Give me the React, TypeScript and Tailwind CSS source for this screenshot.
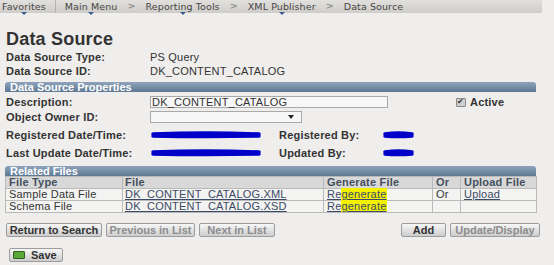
import React from "react";

const navItems = [
  { label: "Favorites", arrow: true, sep: "|" },
  { label: "Main Menu", arrow: true, sep: ">" },
  { label: "Reporting Tools", arrow: true, sep: ">" },
  { label: "XML Publisher", arrow: true, sep: ">" },
  { label: "Data Source", arrow: false, sep: "" },
];

function NavBar() {
  return (
    <div className="flex h-[13px] w-[542px] items-center bg-gradient-to-b from-[#e2e0dc] to-[#cfcdc9] pl-[2px] font-['DejaVu_Sans',sans-serif] text-[9.5px] tracking-[0.1px] text-[#454545]">
      {navItems.map((item) => (
        <div key={item.label} className="flex items-center">
          <span className="relative leading-[13px]">
            {item.label}
            {item.arrow && (
              <span className="absolute bottom-[-2px] left-1/2 h-0 w-0 -translate-x-1/2 border-x-[3px] border-t-[3px] border-x-transparent border-t-[#3b5b8c]" />
            )}
          </span>
          {item.sep === "|" && <span className="mx-[9px] h-[13px] w-px bg-[#b5b3ae]" />}
          {item.sep === ">" && <span className="mx-[10px] text-[#777]">&gt;</span>}
        </div>
      ))}
    </div>
  );
}

function Scribble({ width }: { width: number }) {
  return (
    <svg width={width} height="8" viewBox={`0 0 ${width} 8`}>
      <path
        d={`M3 3 Q ${width / 2} 1 ${width - 3} 3 M3 5 Q ${width / 2} 6 ${width - 3} 5`}
        stroke="#0000c8"
        strokeWidth="3.5"
        strokeLinecap="round"
        fill="none"
      />
    </svg>
  );
}

function SectionHeader({ title }: { title: string }) {
  return (
    <div className="ml-[5px] flex h-[10px] w-[531px] items-center rounded-t-[3px] bg-gradient-to-b from-[#8fa4bb] to-[#5f7893] pl-[5px] text-[11px] font-bold leading-none text-white">
      {title}
    </div>
  );
}

function Btn({ children, dim, className }: { children: React.ReactNode; dim?: boolean; className?: string }) {
  return (
    <div
      className={`flex h-[14px] items-center justify-center rounded-[2px] border border-[#9c9c9c] bg-gradient-to-b from-[#f7f7f7] to-[#cdcdcd] text-[11px] font-bold leading-none ${
        dim ? "text-[#8c8c8c]" : "text-[#333]"
      } ${className ?? ""}`}
    >
      {children}
    </div>
  );
}

function Regenerate() {
  return (
    <span className="text-[#3c4a66] underline">
      Re<span className="bg-[#f5f200]">generate</span>
    </span>
  );
}

export default function App() {
  return (
    <div className="h-[265px] w-[554px] overflow-hidden bg-[#efeeec] font-['Liberation_Sans',sans-serif] text-[#333]">
      <NavBar />

      <h1 className="mt-[16px] ml-[6px] text-[18px] font-bold leading-[20px] tracking-[0.2px] text-[#333]">Data Source</h1>

      <div className="mt-[3px] ml-[6px] grid grid-cols-[144px_1fr] gap-y-[3px] text-[11px] leading-[11px] tracking-[0.2px]">
        <span className="font-bold">Data Source Type:</span>
        <span>PS Query</span>
        <span className="font-bold">Data Source ID:</span>
        <span>DK_CONTENT_CATALOG</span>
      </div>

      <div className="mt-[5px]">
        <SectionHeader title="Data Source Properties" />
      </div>

      <div className="ml-[6px] text-[11px] leading-[11px] tracking-[0.2px]">
        <div className="mt-[4px] flex h-[12px] items-center">
          <span className="w-[144px] font-bold">Description:</span>
          <div className="flex h-[12px] w-[238px] items-center border border-[#a9a9a9] bg-[#f7f7f7] pl-[1px]">
            DK_CONTENT_CATALOG
          </div>
          <div className="ml-[68px] flex items-center gap-[4px]">
            <span className="flex h-[9px] w-[10px] items-center justify-center rounded-[1px] border border-[#888] bg-[#cfcfcf] text-[8px] leading-none">
              ✔
            </span>
            <span className="font-bold">Active</span>
          </div>
        </div>

        <div className="mt-[3px] flex h-[12px] items-center">
          <span className="w-[144px] font-bold">Object Owner ID:</span>
          <div className="flex h-[12px] w-[152px] items-center justify-end border border-[#a9a9a9] bg-[#f7f7f7] pr-[7px]">
            <span className="h-0 w-0 border-x-[3px] border-t-[4px] border-x-transparent border-t-[#222]" />
          </div>
        </div>

        <div className="mt-[6px] flex h-[12px] items-center">
          <span className="w-[144px] font-bold">Registered Date/Time:</span>
          <Scribble width={112} />
          <span className="ml-[17px] w-[103px] font-bold">Registered By:</span>
          <Scribble width={33} />
        </div>

        <div className="mt-[6px] flex h-[12px] items-center">
          <span className="w-[144px] font-bold">Last Update Date/Time:</span>
          <Scribble width={112} />
          <span className="ml-[17px] w-[103px] font-bold">Updated By:</span>
          <Scribble width={33} />
        </div>
      </div>

      <div className="mt-[7px]">
        <SectionHeader title="Related Files" />
      </div>

      <table className="ml-[5px] w-[531px] table-fixed border-collapse text-[11px] leading-[11px] tracking-[0.2px]">
        <colgroup>
          <col className="w-[117px]" />
          <col className="w-[201px]" />
          <col className="w-[109px]" />
          <col className="w-[28px]" />
          <col className="w-[76px]" />
        </colgroup>
        <thead>
          <tr className="h-[12px] bg-[#d8d8d8] text-left text-[#44505e]">
            <th className="border border-[#b9b9b9] pl-[3px] font-bold">File Type</th>
            <th className="border border-[#b9b9b9] pl-[2px] font-bold">File</th>
            <th className="border border-[#b9b9b9] pl-[3px] font-bold">Generate File</th>
            <th className="border border-[#b9b9b9] pl-[3px] font-bold">Or</th>
            <th className="border border-[#b9b9b9] pl-[3px] font-bold">Upload File</th>
          </tr>
        </thead>
        <tbody className="bg-[#f3f3f2]">
          <tr className="h-[12px]">
            <td className="border border-[#b9b9b9] pl-[3px]">Sample Data File</td>
            <td className="border border-[#b9b9b9] pl-[2px] text-[#3c4a66] underline">DK_CONTENT_CATALOG.XML</td>
            <td className="border border-[#b9b9b9] pl-[3px]">
              <Regenerate />
            </td>
            <td className="border border-[#b9b9b9] pl-[3px]">Or</td>
            <td className="border border-[#b9b9b9] pl-[3px] text-[#3c4a66] underline">Upload</td>
          </tr>
          <tr className="h-[12px]">
            <td className="border border-[#b9b9b9] pl-[3px]">Schema File</td>
            <td className="border border-[#b9b9b9] pl-[2px] text-[#3c4a66] underline">DK_CONTENT_CATALOG.XSD</td>
            <td className="border border-[#b9b9b9] pl-[3px]">
              <Regenerate />
            </td>
            <td className="border border-[#b9b9b9]"></td>
            <td className="border border-[#b9b9b9]"></td>
          </tr>
        </tbody>
      </table>

      <div className="mt-[10px] flex w-[540px] items-center pl-[6px]">
        <div className="flex gap-[4px]">
          <Btn className="w-[96px]">Return to Search</Btn>
          <Btn dim className="w-[89px]">Previous in List</Btn>
          <Btn dim className="w-[76px]">Next in List</Btn>
        </div>
        <div className="ml-auto flex gap-[4px]">
          <Btn className="w-[45px]">Add</Btn>
          <Btn dim className="w-[90px]">Update/Display</Btn>
        </div>
      </div>

      <div className="mt-[11px] ml-[9px]">
        <Btn className="w-[54px] justify-start gap-[6px] pl-[3px]">
          <span className="h-[8px] w-[12px] rounded-[1px] border border-[#2f5f1f] bg-[#5aa838]" />
          Save
        </Btn>
      </div>
    </div>
  );
}
